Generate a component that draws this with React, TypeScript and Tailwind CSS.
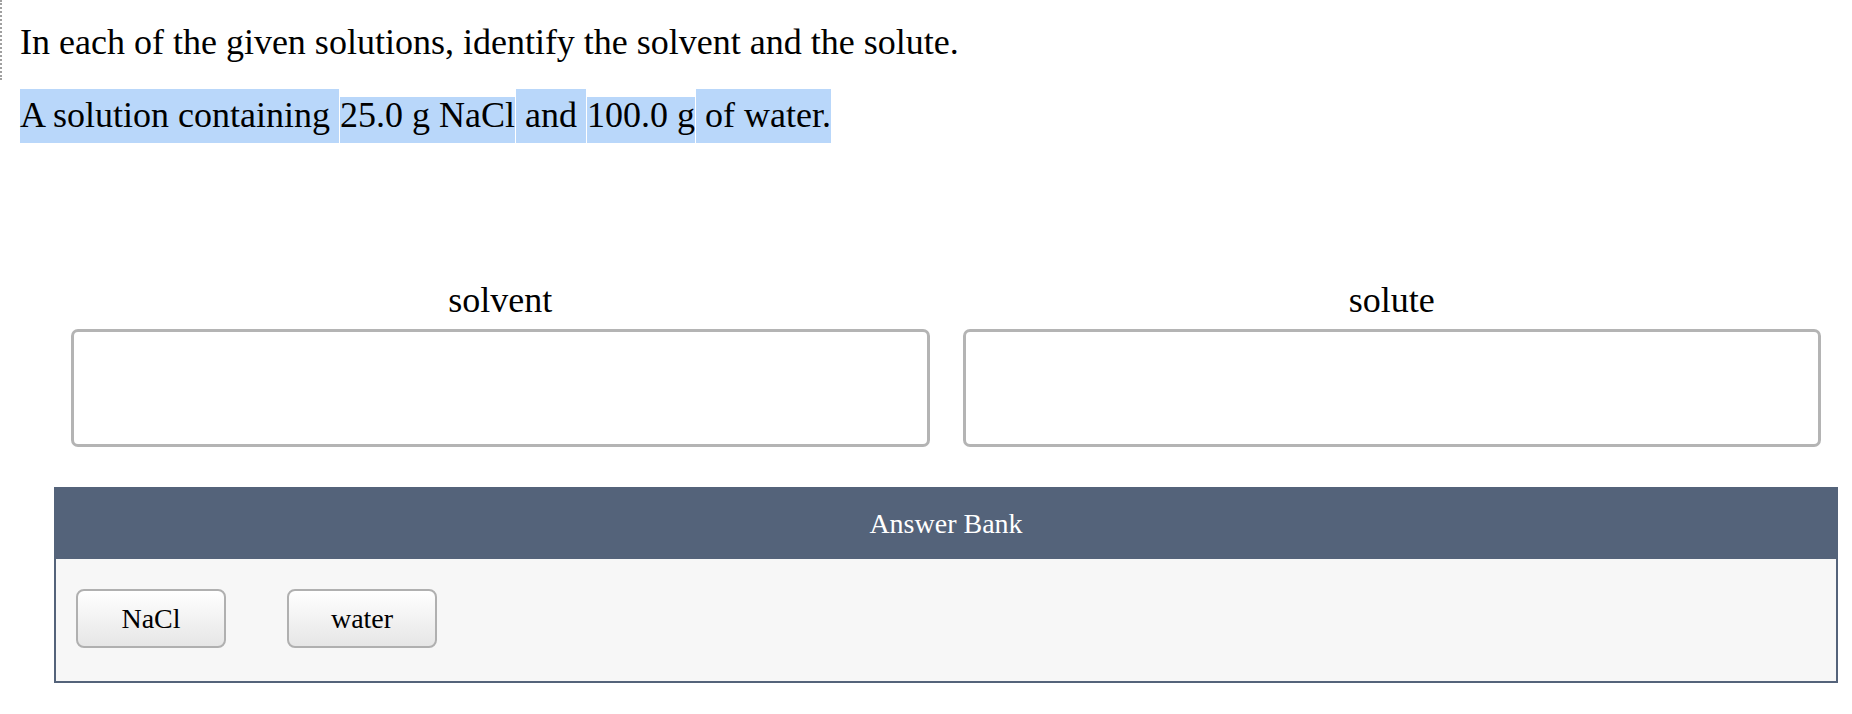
const serif = 'font-["Liberation_Serif","Times_New_Roman",serif]'

type Piece = { text: string; tall: boolean }

const oracion: Piece[] = [
  { text: 'A solution containing ', tall: true },
  { text: '25.0 g NaCl', tall: false },
  { text: ' and ', tall: true },
  { text: '100.0 g', tall: false },
  { text: ' of water.', tall: true },
]

function Resaltado({ p, gap }: { p: Piece; gap: boolean }) {
  return (
    <span
      className={`bg-[#b9d7fa] whitespace-pre leading-[37px] pb-[9px] ${
        p.tall ? 'pt-[8px]' : 'pt-0'
      } ${gap ? 'ml-[1px]' : ''}`}
    >
      {p.text}
    </span>
  )
}

function Casilla({ label }: { label: string }) {
  return (
    <div className="flex-1 flex flex-col items-center">
      <div className="text-[36px] leading-[40px] text-black">{label}</div>
      <div className="mt-[9px] w-full h-[118px] rounded-[7px] border-[3px] border-[#b4b4b4] bg-white" />
    </div>
  )
}

function Ficha({ children }: { children: React.ReactNode }) {
  return (
    <button
      type="button"
      className="w-[150px] h-[59px] rounded-[8px] border-2 border-[#b0b0b0] bg-gradient-to-b from-white to-[#e6e6e6] text-[28px] leading-[31px] text-black flex items-center justify-center"
    >
      {children}
    </button>
  )
}

export default function App() {
  return (
    <div className={`w-[1852px] h-[714px] bg-white overflow-hidden flex ${serif}`}>
      <div className="w-[3px] h-[80px] border-l-2 border-dotted border-[#a0a0a0] shrink-0" />
      <div className="flex-1 flex flex-col pt-[22px]">
        <p className="pl-[17px] text-[36px] leading-[40px] text-black">
          In each of the given solutions, identify the solvent and the solute.
        </p>
        <div className="pl-[17px] mt-[27px] flex items-end text-[36px] text-black">
          {oracion.map((p, i) => (
            <Resaltado key={i} p={p} gap={i > 0} />
          ))}
        </div>

        {/* zonas de respuesta */}
        <div className="mt-[137px] ml-[68px] w-[1750px] flex gap-[33px]">
          <Casilla label="solvent" />
          <Casilla label="solute" />
        </div>

        {/* banco de respuestas */}
        <div className="mt-[40px] ml-[51px] w-[1784px] border-2 border-t-0 border-[#54637a]">
          <div className="-mx-[2px] h-[72px] bg-[#54637a] flex items-center justify-center text-white text-[28px] leading-[31px]">
            Answer Bank
          </div>
          <div className="bg-[#f7f7f7] h-[122px] pt-[30px] pl-[20px] flex gap-[61px] items-start">
            <Ficha>NaCl</Ficha>
            <Ficha>water</Ficha>
          </div>
        </div>
      </div>
    </div>
  )
}
